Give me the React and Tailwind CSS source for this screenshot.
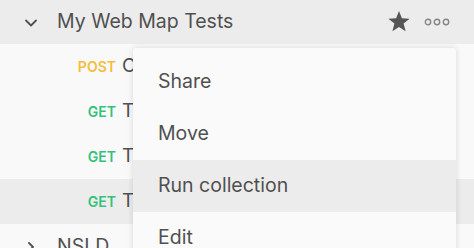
import React from "react";

const font = { fontFamily: "Inter, 'Noto Sans', sans-serif" };

function Chevron({ open = true }) {
  return (
    <svg width="16" height="10" viewBox="0 0 16 10" className="shrink-0">
      {open ? (
        <path d="M3 2.5 L8 7.5 L13 2.5" fill="none" stroke="#505050" strokeWidth="1.8" strokeLinecap="round" strokeLinejoin="round" />
      ) : (
        <path d="M6 1 L10 5 L6 9" fill="none" stroke="#505050" strokeWidth="1.8" strokeLinecap="round" strokeLinejoin="round" />
      )}
    </svg>
  );
}

function Star() {
  return (
    <svg width="24" height="23" viewBox="0 0 24 23">
      <path d="M12 1 L14.9 8.3 L22.6 8.7 L16.6 13.6 L18.6 21.2 L12 16.9 L5.4 21.2 L7.4 13.6 L1.4 8.7 L9.1 8.3 Z" fill="#555555" />
    </svg>
  );
}

function Dots() {
  return (
    <svg width="26" height="8" viewBox="0 0 26 8">
      <circle cx="4" cy="4" r="2.7" fill="none" stroke="#858585" strokeWidth="1.4" />
      <circle cx="13" cy="4" r="2.7" fill="none" stroke="#858585" strokeWidth="1.4" />
      <circle cx="22" cy="4" r="2.7" fill="none" stroke="#858585" strokeWidth="1.4" />
    </svg>
  );
}

function Req({ method, name, active }) {
  const color = method === "POST" ? "text-[#f6bd3a]" : "text-[#33c279]";
  return (
    <div className={`h-[45px] flex items-center ${active ? "bg-[#ececec]" : ""}`}>
      <div className={`w-[116px] text-right text-[14px] font-semibold ${color}`}>{method}</div>
      <div className="ml-[6px] text-[19px] text-[#505050] whitespace-nowrap">{name}</div>
    </div>
  );
}

export default function App() {
  const items = ["Share", "Move", "Run collection", "Edit"];
  return (
    <div className="relative w-[474px] h-[248px] overflow-hidden bg-[#f9f9f9]" style={font}>
      <div className="h-[44px] bg-[#ececec] flex items-center">
        <div className="ml-[23px] w-[16px] flex mt-[1px]"><Chevron /></div>
        <div className="ml-[18px] text-[19.5px] text-[#505050] flex-1 whitespace-nowrap">My Web Map Tests</div>
        <div className="mr-[63px] mt-[-1px] flex"><Star /></div>
        <div className="absolute right-[24px] top-[18px] flex"><Dots /></div>
      </div>
      <Req method="POST" name="Create map" />
      <Req method="GET" name="Test map tiles" />
      <Req method="GET" name="Test layers" />
      <Req method="GET" name="Test legend" active />
      <div className="h-[45px] flex items-center">
        <div className="ml-[23px] w-[16px] flex"><Chevron open={false} /></div>
        <div className="ml-[18px] text-[19.5px] text-[#505050]">NSLD</div>
      </div>

      <div className="absolute left-[133px] top-[48px] w-[323px] h-[230px] bg-[#fafafa] rounded-[3px] shadow-[0_0_6px_rgba(0,0,0,0.14)] pt-[8px]">
        {items.map((t) => (
          <div
            key={t}
            className={`h-[52px] flex items-center pl-[25px] text-[19.5px] text-[#505050] ${t === "Run collection" ? "bg-[#ececec]" : ""}`}
          >
            {t}
          </div>
        ))}
      </div>
    </div>
  );
}
